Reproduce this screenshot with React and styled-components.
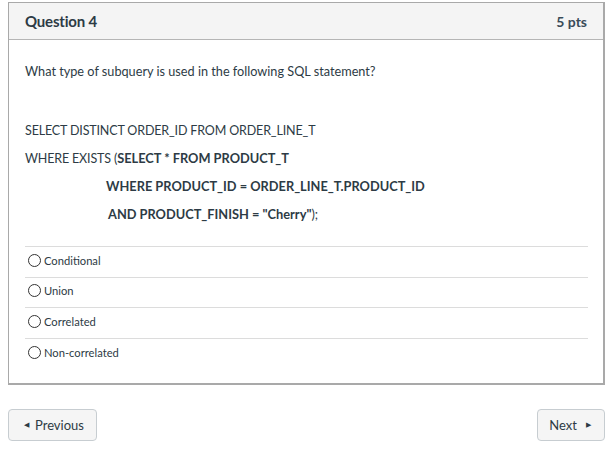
import React from "react";
import styled, { createGlobalStyle } from "styled-components";

const GlobalStyle = createGlobalStyle`
  body {
    margin: 0;
    background: #fff;
    font-family: Lato, "Liberation Sans", sans-serif;
    color: #2d3b45;
  }
`;

const answers = ["Conditional", "Union", "Correlated", "Non-correlated"];

const Page = styled.div`
  width: 614px;
  padding: 2px 9px 0 8px;
  box-sizing: border-box;
`;

const Card = styled.section`
  border: 1px solid #a9a9a9;
  border-width: 1px 2px 2px 1px;
  background: #fff;
`;

const Header = styled.header`
  display: flex;
  justify-content: space-between;
  align-items: center;
  height: 36px;
  padding: 0 16px 0 16px;
  background: #f4f4f4;
  border-bottom: 1px solid #b5b5b5;
  h2 {
    margin: 0;
    font-size: 15px;
    font-weight: 700;
    letter-spacing: -0.2px;
  }
  span {
    font-size: 14px;
    font-weight: 700;
    color: #394b58;
  }
`;

const Body = styled.div`
  padding: 22px 15px 14px 16px;
`;

const Prompt = styled.p`
  margin: 0 0 37px;
  font-size: 12.7px;
  line-height: 18px;
`;

const Code = styled.div`
  font-size: 12.5px;
  letter-spacing: -0.15px;
  padding-bottom: 17px;
  b {
    font-weight: 700;
    font-size: 12.8px;
    letter-spacing: 0;
    line-height: 1;
  }
`;

const CodeLine = styled.p`
  margin: 0;
  height: 28px;
  line-height: 28px;
  padding-left: ${(p) => p.$indent || 0}px;
`;

const Answers = styled.ul`
  list-style: none;
  margin: 0;
  padding: 0;
`;

const Answer = styled.li`
  display: flex;
  align-items: center;
  gap: 3px;
  padding: 0 0 3px 3px;
  box-sizing: content-box;
  height: 26.67px;
  border-top: 1px solid #dcdcdc;
  font-size: 11.2px;
`;

const Radio = styled.span`
  width: 11px;
  height: 11px;
  border: 1px solid #333;
  border-radius: 50%;
  flex: none;
`;

const Footer = styled.nav`
  display: flex;
  justify-content: space-between;
  margin-top: 24px;
`;

const NavButton = styled.button`
  display: inline-flex;
  align-items: center;
  gap: ${(p) => (p.$next ? "9px" : "6px")};
  height: 32px;
  padding: 0 ${(p) => (p.$next ? "13px" : "12px")} 0 ${(p) => (p.$next ? "11px" : "15px")};
  background: #f5f5f5;
  border: 1px solid #c7cdd1;
  border-radius: 4px;
  font-family: Lato, "Liberation Sans", sans-serif;
  font-size: 13px;
  color: #2d3b45;
`;

const Caret = styled.span`
  font-size: 7px;
`;

export default function App() {
  return (
    <Page>
      <GlobalStyle />
      <Card>
        <Header>
          <h2>Question 4</h2>
          <span>5 pts</span>
        </Header>
        <Body>
          <Prompt>What type of subquery is used in the following SQL statement?</Prompt>
          <Code>
            <CodeLine>SELECT DISTINCT ORDER_ID FROM ORDER_LINE_T</CodeLine>
            <CodeLine>
              WHERE EXISTS (<b>SELECT * FROM PRODUCT_T</b>
            </CodeLine>
            <CodeLine $indent={81}>
              <b>WHERE PRODUCT_ID = ORDER_LINE_T.PRODUCT_ID</b>
            </CodeLine>
            <CodeLine $indent={83}>
              <b>AND PRODUCT_FINISH = "Cherry"</b>);
            </CodeLine>
          </Code>
          <Answers>
            {answers.map((a) => (
              <Answer key={a}>
                <Radio />
                {a}
              </Answer>
            ))}
          </Answers>
        </Body>
      </Card>
      <Footer>
        <NavButton>
          <Caret>◀</Caret>Previous
        </NavButton>
        <NavButton $next>
          Next<Caret>▶</Caret>
        </NavButton>
      </Footer>
    </Page>
  );
}
